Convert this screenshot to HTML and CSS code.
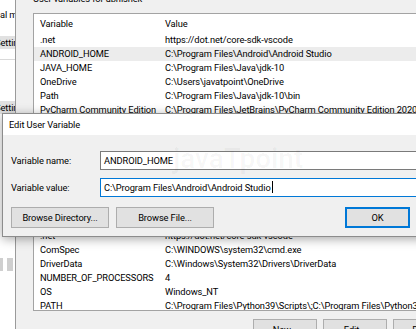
FILE: index.html
```html
<!DOCTYPE html>
<html lang="en">
<head>
    <meta charset="UTF-8">
    <title>Edit User Variable</title>
    <link rel="stylesheet" href="styles.css">
</head>
<body>
    <div class="desktop">
        <!-- System Properties, mostly hidden -->
        <div class="back-window">
            <div class="back-text">al m</div>
            <div class="back-bar">Settings</div>
            <div class="back-line"></div>
            <div class="back-bar second">Settings</div>
            <div class="back-combo"><span></span><span></span></div>
        </div>

        <!-- Environment Variables -->
        <div class="env-dialog">
            <div class="group-label"><span>User variables for abhishek</span></div>
            <div class="list user-list">
                <div class="row head"><span>Variable</span><span>Value</span></div>
                <div class="row"><span>.net</span><span>https://dot.net/core-sdk-vscode</span></div>
                <div class="row selected"><span>ANDROID_HOME</span><span>C:\Program Files\Android\Android Studio</span></div>
                <div class="row"><span>JAVA_HOME</span><span>C:\Program Files\Java\jdk-10</span></div>
                <div class="row"><span>OneDrive</span><span>C:\Users\javatpoint\OneDrive</span></div>
                <div class="row"><span>Path</span><span>C:\Program Files\Java\jdk-10\bin</span></div>
                <div class="row"><span>PyCharm Community Edition</span><span>C:\Program Files\JetBrains\PyCharm Community Edition 2020.3</span></div>
            </div>
            <div class="list system-list">
                <div class="row head"></div>
                <div class="row"><span>.net</span><span>https://dot.net/core-sdk-vscode</span></div>
                <div class="row"><span>ComSpec</span><span>C:\WINDOWS\system32\cmd.exe</span></div>
                <div class="row"><span>DriverData</span><span>C:\Windows\System32\Drivers\DriverData</span></div>
                <div class="row"><span>NUMBER_OF_PROCESSORS</span><span>4</span></div>
                <div class="row"><span>OS</span><span>Windows_NT</span></div>
                <div class="row"><span>PATH</span><span>C:\Program Files\Python39\Scripts\;C:\Program Files\Python39\</span></div>
            </div>
            <div class="env-buttons">
                <button class="btn">New...</button>
                <button class="btn">Edit...</button>
                <button class="btn">Delete</button>
            </div>
        </div>

        <!-- Edit User Variable -->
        <div class="edit-dialog">
            <div class="title-bar">Edit User Variable</div>
            <div class="edit-body">
                <div class="field">
                    <label>Variable name:</label>
                    <div class="input">ANDROID_HOME</div>
                </div>
                <div class="field">
                    <label>Variable value:</label>
                    <div class="input focused">C:\Program Files\Android\Android Studio<span class="caret"></span></div>
                </div>
                <div class="edit-buttons">
                    <button class="btn wide">Browse Directory...</button>
                    <button class="btn wide">Browse File...</button>
                    <button class="btn default">OK</button>
                    <button class="btn">Cancel</button>
                </div>
            </div>
            <div class="watermark">javaTpoint</div>
        </div>
    </div>
</body>
</html>
```

FILE: styles.css
```css
body {
    margin: 0;
    font-family: Roboto, "Noto Sans", sans-serif;
    font-size: 9.3px;
    letter-spacing: -0.1px;
    color: #000;
}
.desktop {
    position: relative;
    width: 416px;
    height: 329px;
    overflow: hidden;
    background-color: #fff;
}

/* window behind everything */
.back-window {
    position: absolute;
    left: 0;
    top: 0;
    width: 15px;
    height: 329px;
    background-color: #fff;
    overflow: hidden;
    white-space: nowrap;
}
.back-text {
    margin-top: 8px;
    line-height: 14px;
}
.back-bar {
    margin-top: 14px;
    height: 13px;
    line-height: 13px;
    background-color: #e1e1e1;
    text-indent: -5px;
}
.back-bar.second {
    margin-top: 41px;
}
.back-line {
    margin-top: 10px;
    height: 1px;
    background-color: #d9d9d9;
}
.back-combo {
    display: flex;
    gap: 4px;
    margin-top: 144px;
}
.back-combo span {
    width: 3px;
    height: 13px;
    background-color: #cfcfcf;
}
.back-combo span + span {
    width: 6px;
}

/* Environment Variables dialog */
.env-dialog {
    position: absolute;
    left: 15px;
    top: 0;
    width: 480px;
    height: 360px;
    border-left: 1px solid #9a9a9a;
    background-color: #f0f0f0;
    padding-left: 17px;
}
.group-label {
    height: 13px;
    overflow: hidden;
    line-height: 14px;
}
.group-label span {
    display: block;
    margin-top: -8px;
}
.list {
    box-sizing: border-box;
    border: 1px solid #a3a3a3;
    background-color: #fff;
    overflow: hidden;
}
.user-list {
    height: 180px;
}
.system-list {
    height: 102px;
    margin-top: 16px;
}
.row {
    display: grid;
    grid-template-columns: 125px 1fr;
    height: 14px;
    line-height: 14px;
    padding-left: 6px;
    white-space: nowrap;
}
.row.head {
    height: 19px;
    line-height: 19px;
}
.row.selected {
    background-color: #ececec;
}
.env-buttons {
    display: flex;
    gap: 6px;
    margin-top: 8px;
    padding-left: 220px;
}
.btn {
    box-sizing: border-box;
    width: 64px;
    height: 21px;
    padding: 0;
    font-family: inherit;
    font-size: 9.3px;
    letter-spacing: -0.1px;
    color: #000;
    border: 1px solid #adadad;
    background-color: #e1e1e1;
}

/* Edit User Variable dialog */
.edit-dialog {
    position: absolute;
    left: 2px;
    top: 113px;
    width: 486px;
    border: 1px solid #8c8c8c;
    background-color: #f0f0f0;
    box-shadow: 0 2px 10px rgba(0, 0, 0, 0.35);
}
.title-bar {
    height: 21px;
    line-height: 21px;
    padding-left: 6px;
    background-color: #fff;
}
.edit-body {
    padding: 16px 8px 8px 8px;
}
.field {
    display: flex;
    align-items: center;
    margin-bottom: 8px;
}
.field label {
    width: 89px;
}
.input {
    box-sizing: border-box;
    flex: 1;
    height: 19px;
    line-height: 17px;
    padding-left: 3px;
    border: 1px solid #7a7a7a;
    background-color: #fff;
    white-space: nowrap;
}
.input.focused {
    border-color: #0078d7;
}
.caret {
    display: inline-block;
    width: 1px;
    height: 12px;
    margin-left: 1px;
    vertical-align: -2px;
    background-color: #000;
}
.edit-buttons {
    display: flex;
    gap: 6px;
    margin-top: 10px;
}
.btn.wide {
    width: 98px;
}
.btn.wide + .btn.wide {
    margin-left: 1px;
}
.btn.default {
    margin-left: auto;
    width: 65px;
    border: 2px solid #0078d7;
}
.btn.default + .btn {
    width: 65px;
}
.watermark {
    position: absolute;
    left: 170px;
    top: 28px;
    font-size: 28px;
    font-weight: bold;
    color: rgba(0, 0, 0, 0.03);
    pointer-events: none;
}
```
